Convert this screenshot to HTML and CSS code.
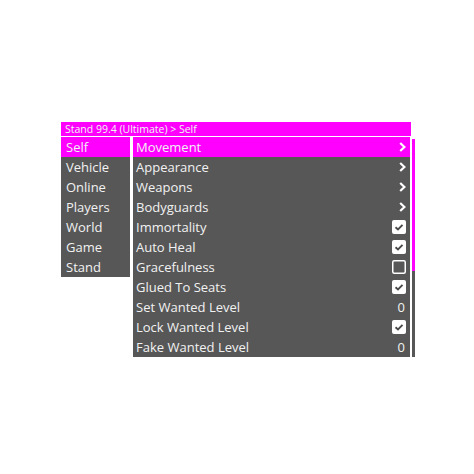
FILE: index.html
```html
<!DOCTYPE html>
<html>
<head>
<meta charset="utf-8">
<link rel="stylesheet" href="styles.css">
</head>
<body>
<div class="menu">
  <div class="header">Stand 99.4 (Ultimate) &gt; Self</div>
  <div class="panes">
    <div class="tabs">
      <div class="row active">Self</div>
      <div class="row">Vehicle</div>
      <div class="row">Online</div>
      <div class="row">Players</div>
      <div class="row">World</div>
      <div class="row">Game</div>
      <div class="row">Stand</div>
    </div>
    <div class="list">
      <div class="row active"><span>Movement</span><svg class="chev" viewBox="0 0 7 10"><path d="M1.2 1 L5.4 5 L1.2 9" fill="none" stroke="#fff" stroke-width="2.2"/></svg></div>
      <div class="row"><span>Appearance</span><svg class="chev" viewBox="0 0 7 10"><path d="M1.2 1 L5.4 5 L1.2 9" fill="none" stroke="#fff" stroke-width="2.2"/></svg></div>
      <div class="row"><span>Weapons</span><svg class="chev" viewBox="0 0 7 10"><path d="M1.2 1 L5.4 5 L1.2 9" fill="none" stroke="#fff" stroke-width="2.2"/></svg></div>
      <div class="row"><span>Bodyguards</span><svg class="chev" viewBox="0 0 7 10"><path d="M1.2 1 L5.4 5 L1.2 9" fill="none" stroke="#fff" stroke-width="2.2"/></svg></div>
      <div class="row"><span>Immortality</span><svg class="box" viewBox="0 0 14 14"><rect x="0" y="0" width="14" height="14" rx="2" fill="#fff"/><path d="M3.5 7.2 L6 9.5 L10.5 4.8" fill="none" stroke="#4a4a4a" stroke-width="1.9"/></svg></div>
      <div class="row"><span>Auto Heal</span><svg class="box" viewBox="0 0 14 14"><rect x="0" y="0" width="14" height="14" rx="2" fill="#fff"/><path d="M3.5 7.2 L6 9.5 L10.5 4.8" fill="none" stroke="#4a4a4a" stroke-width="1.9"/></svg></div>
      <div class="row"><span>Gracefulness</span><svg class="box" viewBox="0 0 14 14"><rect x="0.75" y="0.75" width="12.5" height="12.5" rx="1.5" fill="none" stroke="#fff" stroke-width="1.5"/></svg></div>
      <div class="row"><span>Glued To Seats</span><svg class="box" viewBox="0 0 14 14"><rect x="0" y="0" width="14" height="14" rx="2" fill="#fff"/><path d="M3.5 7.2 L6 9.5 L10.5 4.8" fill="none" stroke="#4a4a4a" stroke-width="1.9"/></svg></div>
      <div class="row"><span>Set Wanted Level</span><span class="val">0</span></div>
      <div class="row"><span>Lock Wanted Level</span><svg class="box" viewBox="0 0 14 14"><rect x="0" y="0" width="14" height="14" rx="2" fill="#fff"/><path d="M3.5 7.2 L6 9.5 L10.5 4.8" fill="none" stroke="#4a4a4a" stroke-width="1.9"/></svg></div>
      <div class="row"><span>Fake Wanted Level</span><span class="val">0</span></div>
    </div>
    <div class="scroll"><div class="thumb"></div></div>
  </div>
</div>
</body>
</html>
```

FILE: styles.css
```css
html, body {
  margin: 0;
  padding: 0;
  background: #fff;
}
body {
  font-family: "Open Sans", "Noto Sans", sans-serif;
  color: #f2f2f2;
}
.menu {
  margin: 122px 0 0 61px;
  width: 355px;
}
.header {
  width: 350px;
  height: 14px;
  background: #ff00ff;
  font-size: 10.5px;
  line-height: 14px;
  padding-left: 4px;
  box-sizing: border-box;
  color: #f4f4f4;
}
.panes {
  display: flex;
  align-items: flex-start;
  margin-top: 1px;
}
.tabs {
  width: 69px;
  background: #575757;
}
.list {
  width: 277px;
  margin-left: 3px;
  background: #575757;
}
.row {
  height: 20px;
  line-height: 20px;
  font-size: 13px;
  padding-left: 3px;
  display: flex;
  align-items: center;
  justify-content: space-between;
  padding-right: 4px;
}
.tabs .row {
  padding-left: 5px;
}
.row.active {
  background: #ff00ff;
}
.chev {
  width: 7px;
  height: 10px;
}
.box {
  width: 14px;
  height: 14px;
}
.val {
  padding-right: 1px;
}
.scroll {
  width: 3px;
  height: 218px;
  margin-left: 2px;
  margin-top: 2px;
  background: #575757;
}
.thumb {
  height: 132px;
  background: #ff00ff;
}
```
